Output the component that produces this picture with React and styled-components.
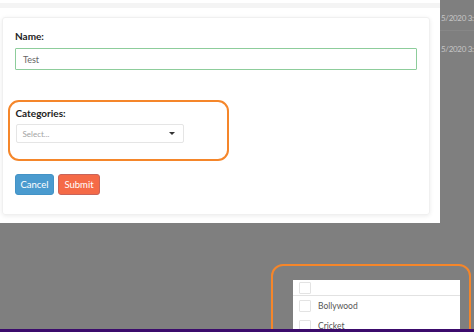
import React from 'react'
import styled, { createGlobalStyle } from 'styled-components'

const GlobalStyle = createGlobalStyle`
  html, body { margin: 0; padding: 0; }
  body {
    font-family: Lato, "Open Sans", sans-serif;
    background: #7f7f7f;
    overflow: hidden;
  }
`

const Page = styled.div`
  position: relative;
  width: 474px;
  height: 332px;
  background: #7f7f7f;
  display: grid;
  grid-template-columns: 440px 1fr;
  grid-template-rows: 1fr 3px;
  overflow: hidden;
`

const Modal = styled.div`
  background: #fff;
  height: 223px;
  display: flex;
  flex-direction: column;
`

const ModalTop = styled.div`
  height: 5px;
  margin-top: 3px;
  background: #f4f4f4;
`

const Card = styled.div`
  margin: 9px 10px 0 2px;
  height: 198px;
  box-sizing: border-box;
  border: 1px solid #f0f0f0;
  border-radius: 3px;
  box-shadow: 0 1px 4px rgba(0, 0, 0, 0.08);
  padding: 12px 12px 0 12px;
  display: flex;
  flex-direction: column;
`

const Label = styled.div`
  font-family: Lato, sans-serif;
  font-weight: 700;
  font-size: 10px;
  color: #222;
  height: 12px;
  line-height: 12px;
`

const TextInput = styled.div`
  margin-top: 6px;
  width: 402px;
  height: 22px;
  box-sizing: border-box;
  border: 1px solid #8dcd9b;
  border-radius: 1px;
  padding-left: 7px;
  display: flex;
  align-items: center;
  font-family: Lato, sans-serif;
  font-size: 9px;
  color: #666;
`

const Highlight = styled.div`
  margin: 30px 0 0 -7px;
  width: 221px;
  height: 61px;
  box-sizing: border-box;
  border: 2.5px solid #f5862a;
  border-radius: 11px;
  padding: 5px 0 0 5.5px;
`

const Select = styled.div`
  margin-top: 5px;
  width: 168px;
  height: 19px;
  box-sizing: border-box;
  border: 1px solid #e5e5e5;
  border-radius: 2px;
  display: flex;
  align-items: center;
  justify-content: space-between;
  padding: 0 8px 0 6px;
  font-family: Lato, sans-serif;
  font-size: 8px;
  color: #a3a3a3;
`

const Caret = styled.span`
  width: 0;
  height: 0;
  border-left: 3px solid transparent;
  border-right: 3px solid transparent;
  border-top: 3px solid #333;
`

const Buttons = styled.div`
  margin-top: 13px;
  display: flex;
  gap: 4px;
`

const Button = styled.div`
  height: 21px;
  width: ${p => p.$w}px;
  box-sizing: border-box;
  border-radius: 3px;
  background: ${p => p.$bg};
  border: 1px solid ${p => p.$border};
  color: #fff;
  font-family: Lato, sans-serif;
  font-size: 9.5px;
  display: flex;
  align-items: center;
  justify-content: center;
`

const Side = styled.div`
  overflow: hidden;
  display: flex;
  flex-direction: column;
`

const SideRow = styled.div`
  height: 31px;
  box-sizing: border-box;
  padding-top: 13px;
  padding-left: 1px;
  border-bottom: 1px solid #878787;
  white-space: nowrap;
  font-family: Lato, sans-serif;
  font-size: 8px;
  letter-spacing: -0.3px;
  color: #c6c6c6;
  &:last-child { border-bottom: none; }
`

const BottomBar = styled.div`
  grid-column: 1 / span 2;
  background: #3b0b6c;
  position: relative;
  z-index: 2;
`

const Popup = styled.div`
  position: absolute;
  z-index: 1;
  left: 271px;
  top: 264px;
  width: 200px;
  height: 90px;
  box-sizing: border-box;
  border: 2.5px solid #f5862a;
  border-radius: 12px;
  padding: 14px 0 0 20px;
`

const List = styled.div`
  width: 167px;
  background: #fff;
  display: flex;
  flex-direction: column;
`

const Option = styled.div`
  height: ${p => (p.$head ? 16 : 20)}px;
  box-sizing: border-box;
  display: flex;
  align-items: center;
  gap: 7px;
  padding-left: 6px;
  border-bottom: ${p => (p.$head ? '1px solid #e2e2e2' : 'none')};
  font-family: Lato, sans-serif;
  font-size: 8.5px;
  color: #555;
`

const Check = styled.span`
  width: 10px;
  height: 10px;
  border: 1px solid #e3e3e3;
  border-radius: 1px;
`

export default function App() {
  return (
    <>
      <GlobalStyle />
      <Page>
        <Modal>
          <ModalTop />
          <Card>
            <Label>Name:</Label>
            <TextInput>Test</TextInput>
            <Highlight>
              <Label>Categories:</Label>
              <Select>
                <span>Select...</span>
                <Caret />
              </Select>
            </Highlight>
            <Buttons>
              <Button $w={39} $bg="#4a9bcf" $border="#4393c6">Cancel</Button>
              <Button $w={42} $bg="#f56a47" $border="#c8645a">Submit</Button>
            </Buttons>
          </Card>
        </Modal>
        <Side>
          <SideRow>5/2020 3:</SideRow>
          <SideRow>5/2020 3:</SideRow>
        </Side>
        <BottomBar />
        <Popup>
          <List>
            <Option $head><Check /></Option>
            <Option><Check />Bollywood</Option>
            <Option><Check />Cricket</Option>
          </List>
        </Popup>
      </Page>
    </>
  )
}
